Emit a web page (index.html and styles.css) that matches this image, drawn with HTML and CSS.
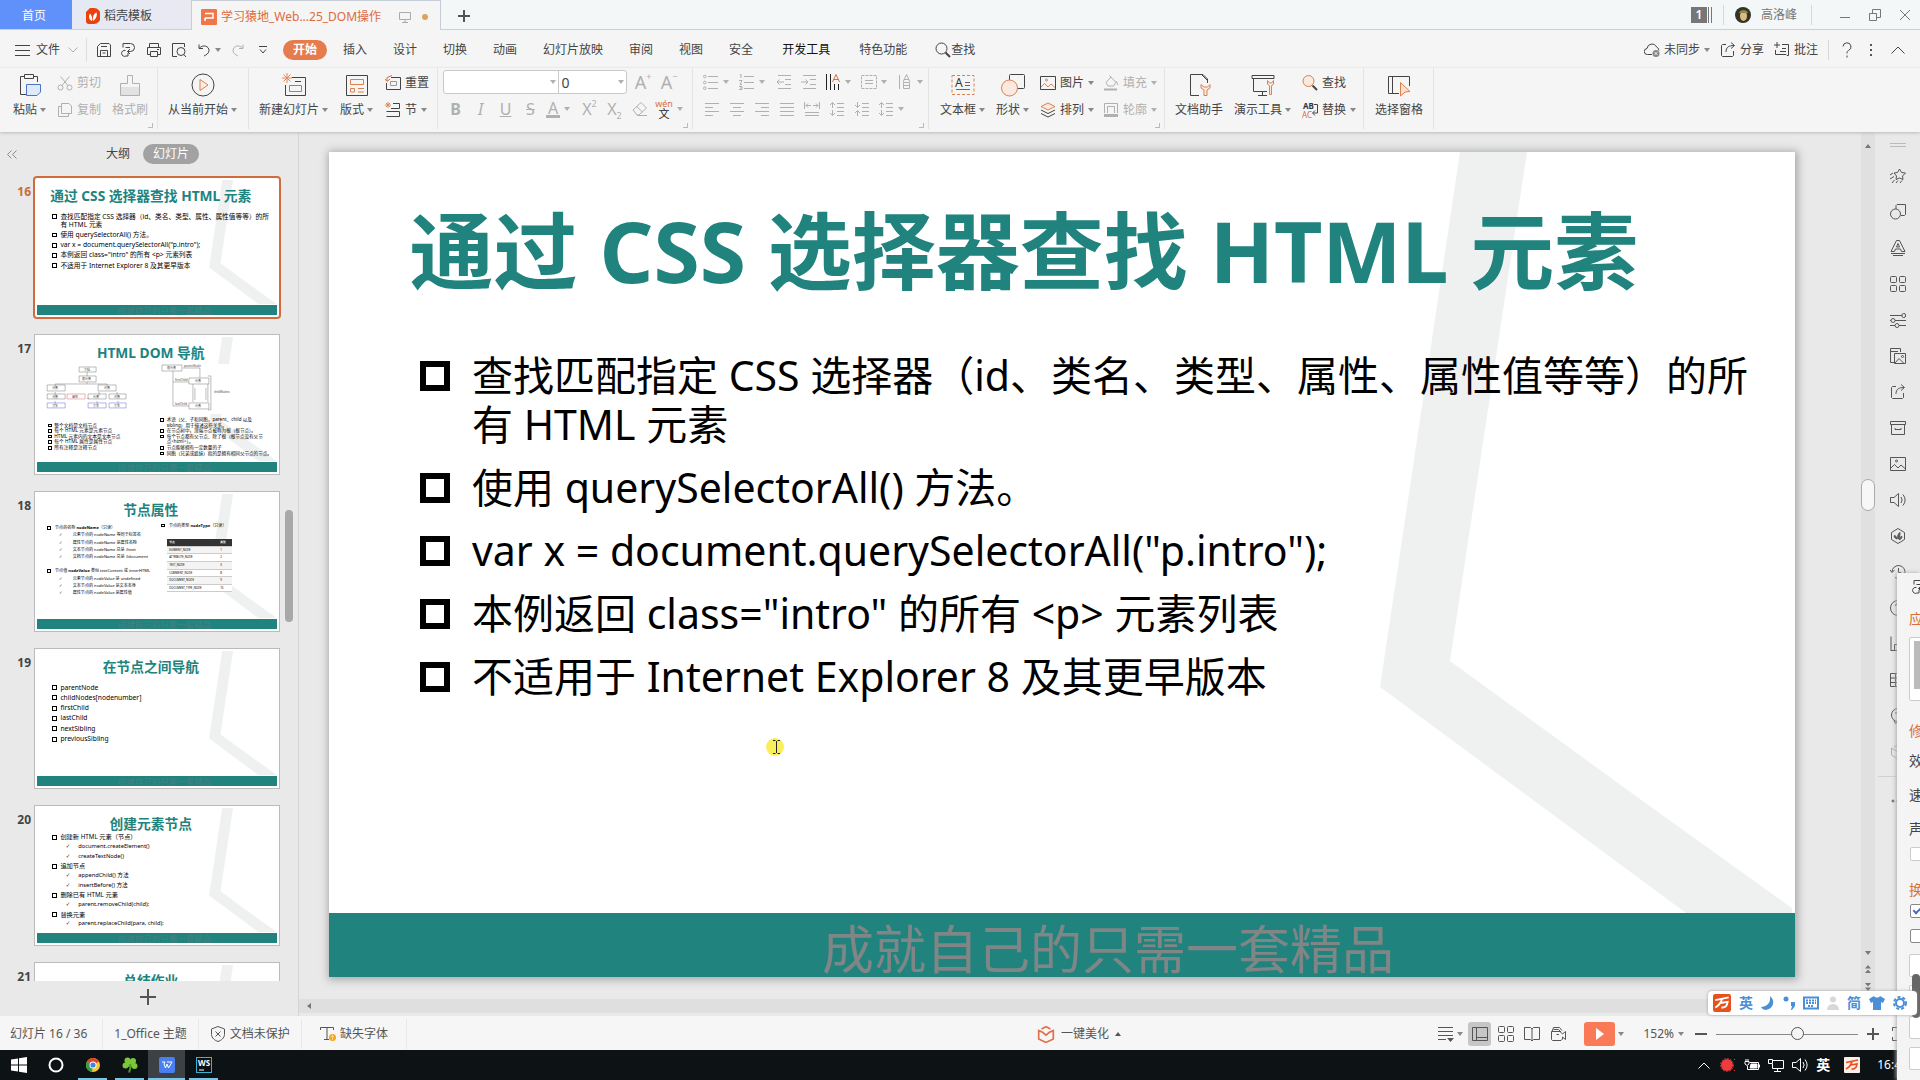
FILE: index.html
```html
<!DOCTYPE html>
<html lang="zh-CN">
<head>
<meta charset="utf-8">
<title>学习猿地_Web...25_DOM操作</title>
<link rel="stylesheet" href="styles.css">
</head>
<body>
<svg class="defs" width="0" height="0" aria-hidden="true">
  <symbol id="band" viewBox="0 0 1466 761" preserveAspectRatio="none"><path d="M1131 0H1198L1121 509 1311 647 1463 756V761H1357L1051 535Z" fill="#eff1f1"/></symbol>
  <symbol id="arrow" viewBox="0 0 6 4"><path d="M0 0H6L3 4Z" fill="currentColor"/></symbol>
  <symbol id="save" viewBox="0 0 16 16"><path d="M1.500 14.500V4.500L4.500 1.500H13L14.500 3V14.500Z M4.500 14V8.500H11.500V14 M5 4.500H11 M6.500 11H9.500"/></symbol>
  <symbol id="export" viewBox="0 0 16 16"><path d="M2 5.500V1.500H9.500A4 4 0 0 1 9.500 9.500H6.500 M4.500 5.500H9 M9 7 6.500 9.500 9 12 M4.500 8.500A3 3 0 1 0 5 14H7V11"/></symbol>
  <symbol id="print" viewBox="0 0 16 16"><path d="M3.500 5V1.500H12.500V5 M4 12.500H1.500V5.500H14.500V12.500H12 M4.500 9.500H11.500V14.500H4.500Z M11 7.500H13"/></symbol>
  <symbol id="preview" viewBox="0 0 16 16"><path d="M6 14.500H1.500V1.500H13.500V5 M12.800 12.500 15 15"/><circle cx="10" cy="9.500" r="4"/></symbol>
  <symbol id="undo" viewBox="0 0 16 16"><path d="M3 2.500V6.500H7 M3 6.500C7 2 13 4 13 8.500 13 11.500 10 13 8 14"/></symbol>
  <symbol id="redo" viewBox="0 0 16 16"><path d="M13 2.500V6.500H9 M13 6.500C9 2 3 4 3 8.500 3 11.500 6 13 8 14"/></symbol>
  <symbol id="search" viewBox="0 0 16 16"><circle cx="6.500" cy="6.500" r="5.500"/><path d="M10.500 10.500 15 15" stroke-width="2"/></symbol>
  <symbol id="cloud" viewBox="0 0 16 16"><path d="M8 12.500H3.500A3 3 0 0 1 3 6.500 5 5 0 0 1 12.500 5 4 4 0 0 1 15 8.500"/><circle cx="12" cy="11.500" r="3.500" fill="#888" stroke="none"/><path d="M10.800 10.300 13.200 12.700M13.200 10.300 10.800 12.700" stroke="#fff"/></symbol>
  <symbol id="share" viewBox="0 0 16 16"><path d="M6 2.500H2.500L1.500 3.500V13.500L2.500 14.500H12.500L13.500 13.500V9 M6 10C6 5 9 3.500 14 3.500 M11 .500 14.500 3.500 11 6.500"/></symbol>
  <symbol id="note" viewBox="0 0 16 16"><path d="M3 0V6M0 3H6 M8 2.500H14.500V13.500H13L12 12.500H1.500V8 M6 9.500H12M8 6.500H12"/></symbol>
  <symbol id="paste" viewBox="0 0 24 24"><path d="M7 3.500H2.500V21.500H8 M15 3.500H19.500V9 M6.500 1.500H15.500V5.500H6.500Z"/><path d="M8.500 11.500H22.500V19L19 22.500H8.500Z" fill="#dfeaff" stroke="#4a74c4"/></symbol>
  <symbol id="cut" viewBox="0 0 16 16"><circle cx="3.500" cy="12.500" r="2.500"/><circle cx="12.500" cy="12.500" r="2.500"/><path d="M5 10.500 12.500 1.500M11 10.500 3.500 1.500"/></symbol>
  <symbol id="copy" viewBox="0 0 16 16"><path d="M4.500 1.500H12L14.500 4V11.500H4.500Z M4 4.500H1.500V14.500H11.500V12"/></symbol>
  <symbol id="brush" viewBox="0 0 24 24"><path d="M9.500 10.500V2.500H14.500V10.500H21.500V22.500H2.500V10.500Z"/><path d="M3 14H21V22H3Z" fill="#e2e2e2" stroke="none"/></symbol>
  <symbol id="play" viewBox="0 0 24 24"><circle cx="12" cy="12" r="11"/><path d="M9 6.500 17 12 9 17.500Z" fill="#fdeee6" stroke="#d98250"/></symbol>
  <symbol id="newslide" viewBox="0 0 24 24"><path d="M10 4.500H23.500V22.500H3.500V12 M13 8.500H19"/><path d="M7.500 12.500H19.500V18.500H7.500Z" stroke="#888"/><path d="M5 0V10M0 5H10M1.500 1.500 8.500 8.500M8.500 1.500 1.500 8.500" stroke="#e08a58"/></symbol>
  <symbol id="layout" viewBox="0 0 24 24"><path d="M1.500 2.500H22.500V22.500H1.500Z"/><path d="M5.500 6.500H18.500V11.500H5.500Z M5.500 15.500H9.500V19H5.500Z M13 15.500H19M13 19H19" stroke="#d98250" fill="none"/></symbol>
  <symbol id="reset" viewBox="0 0 16 16"><path d="M6 2.500H15.500V14.500H1.500V8"/><path d="M5.500 6.500H11.500V10.500H5.500Z" stroke="#999"/><path d="M7 .500 2 2.500V6M0 4 2 6.500 5 4" stroke="#d9703c"/></symbol>
  <symbol id="section" viewBox="0 0 16 16"><path d="M8 1.500H14.500V6.500H6 M1.500 9.500H14.500V14.500H1.500"/><path d="M3 0V6M0 3H6M1 1 5 5M5 1 1 5" stroke="#e08a58"/></symbol>
  <symbol id="eraser" viewBox="0 0 16 16"><path d="M1 9 9 1.500 14.500 7 7 14H5Z M4.500 5.500 10.500 11 M5 14.500H15"/></symbol>
  <symbol id="bullets" viewBox="0 0 16 16"><path d="M5 2.500H15M5 8.500H15M5 14.500H15"/><circle cx="1.800" cy="2.500" r="1.300"/><circle cx="1.800" cy="8.500" r="1.300"/><circle cx="1.800" cy="14.200" r="1.300"/></symbol>
  <symbol id="numbers" viewBox="0 0 16 16"><path d="M5 2.500H15M5 8.500H15M5 14.500H15 M1 .500H2V4 M0 6.500H3L1 10.500H3 M0 12.500H3V15.500H0M1 14H3"/></symbol>
  <symbol id="outdent" viewBox="0 0 16 16"><path d="M2 1.500H15M9 5.500H15M9 10.500H15M2 14.500H15M1 8H8M3.500 5.500 1 8 3.500 10.500"/></symbol>
  <symbol id="indent" viewBox="0 0 16 16"><path d="M2 1.500H15M9 5.500H15M9 10.500H15M2 14.500H15M0 8H7M4.500 5.500 7 8 4.500 10.500"/></symbol>
  <symbol id="textdir" viewBox="0 0 16 16"><path d="M1.500 0V16M5.500 0V16M9.500 10V16M13.500 10V16" stroke="#222"/><path d="M7.500 8 11 .500 14.500 8M8.500 5.500H13.500" stroke="#d9703c"/></symbol>
  <symbol id="aligntext" viewBox="0 0 16 16"><path d="M.500 1.500H15.500V14.500H.500Z" stroke-dasharray="3 1"/><path d="M4 6.500H12M4 9.500H12"/></symbol>
  <symbol id="spacing" viewBox="0 0 16 16"><path d="M2.500 1V15M6 8 9.500 .500 13 8M7 5.500H12M6.500 8.500H12.500V14.500H6.500ZM6.500 11.500H12"/></symbol>
  <symbol id="al" viewBox="0 0 16 16"><path d="M1 2.500H15M1 6.500H9M1 10.500H15M1 14.500H9"/></symbol>
  <symbol id="ac" viewBox="0 0 16 16"><path d="M1 2.500H15M4 6.500H12M1 10.500H15M4 14.500H12"/></symbol>
  <symbol id="ar" viewBox="0 0 16 16"><path d="M1 2.500H15M7 6.500H15M1 10.500H15M7 14.500H15"/></symbol>
  <symbol id="aj" viewBox="0 0 16 16"><path d="M1 2.500H15M1 6.500H15M1 10.500H15M1 14.500H15"/></symbol>
  <symbol id="dist" viewBox="0 0 16 16"><path d="M.500 1V8M15.500 1V8M2 4.500H7M9 4.500H14M4 2.500 2 4.500 4 6.500M12 2.500 14 4.500 12 6.500M1 11.500H15M1 14.500H15"/></symbol>
  <symbol id="lsp" viewBox="0 0 16 16"><path d="M8 2.500H15M8 6.500H15M8 10.500H15M8 14.500H15M3.500 2V7M1 4 3.500 1.500 6 4M3.500 9V14M1 12 3.500 14.500 6 12"/></symbol>
  <symbol id="lsin" viewBox="0 0 16 16"><path d="M8 2.500H15M8 6.500H15M8 10.500H15M8 14.500H15M3.500 1V6M1 4 3.500 6.500 6 4M3.500 10V15M1 12 3.500 9.500 6 12"/></symbol>
  <symbol id="textbox" viewBox="0 0 24 24"><path d="M1 2.500H23V21.500H1Z" stroke="#d98250" stroke-dasharray="3 2"/><path d="M14 9.500H19M14 12.500H19M5 16.500H19" stroke="#666"/><text x="4" y="14" font-size="12" fill="#333" stroke="none">A</text></symbol>
  <symbol id="shape" viewBox="0 0 24 24"><rect x="8.500" y="1.500" width="15" height="14" rx="1"/><circle cx="8.500" cy="15" r="8" fill="#fbe9df" stroke="#d98250"/></symbol>
  <symbol id="pic" viewBox="0 0 16 16"><path d="M.500 1.500H15.500V14.500H.500Z"/></symbol>
  <symbol id="hills" viewBox="0 0 16 16"><path d="M1 12 4.500 8.500 8 12 11 9 15 12.500"/><circle cx="6.500" cy="5" r="1"/></symbol>
  <symbol id="stack" viewBox="0 0 16 16"><path d="M1 8 8 11.500 15 8M1 11.500 8 15 15 11.500"/><path d="M1 4.500 8 1 15 4.500 8 8Z" fill="#fbe9df" stroke="#d98250"/></symbol>
  <symbol id="fill" viewBox="0 0 16 16"><path d="M3 7.500 8 2 13 7.500 10.500 11H5Z M8 2 6.500 .500 M13 6 15 10"/><path d="M1 14.500H14" stroke-width="2"/></symbol>
  <symbol id="outline" viewBox="0 0 16 16"><path d="M1.500 11V1.500H14.500V11M4.500 11V4.500H11.500V11"/><path d="M1 13.500H15" stroke-width="3"/></symbol>
  <symbol id="assist" viewBox="0 0 24 24"><path d="M12 22.500H3.500V1.500H16L20.500 6V10M15 2 20 7"/><path d="M14 11.500V15L17 17V22.500H20V17L23 15V11.500L20.500 14H17Z" fill="#fbe9df" stroke="#d98250"/></symbol>
  <symbol id="demo" viewBox="0 0 24 24"><path d="M1 2.500H23V5.500H1Z M2.500 6V18.500H16M11.500 19V22.500M7 22.500H16"/><path d="M16.500 7.500V11L18.500 13V21.500H20.500V13L22.500 11V7.500L20.500 10H18.500Z" fill="#fbe9df" stroke="#d98250"/></symbol>
  <symbol id="find" viewBox="0 0 16 16"><path d="M10.500 10.500 15 15" stroke-width="2"/><circle cx="6.500" cy="6" r="5.500" fill="#fbe9df" stroke="#d98250"/></symbol>
  <symbol id="replace" viewBox="0 0 16 16"><path d="M12 2.500H15.500V11H11M13 8.500 10.500 11 13 13.500" /><text x="1" y="7" font-size="8" font-weight="700" fill="#333" stroke="none">AB</text><text x="0" y="16" font-size="8" fill="#d9703c" stroke="none">AC</text></symbol>
  <symbol id="pane" viewBox="0 0 24 24"><path d="M12 20.500H1.500V3.500H22.500V13M5.500 4V20"/><path d="M13.500 9.500 23 18.500 18 19 13.500 23Z" fill="#fbe0d0" stroke="#d98250"/></symbol>
  <symbol id="star" viewBox="0 0 16 16"><path d="M9.500 1 11.500 4.500 15.500 5 12.500 8 13 11.500 9.500 10 6 11.500 6.500 8 4 5 7.500 4.500Z M0 7 3 5M0 11 4 8.500M2 15 4.500 12M6 15 8 12.500M10 15 12 12.500"/></symbol>
  <symbol id="shapes" viewBox="0 0 16 16"><path d="M6 5V1.500L7 .500H15.500V10.500L14.500 11.500H11"/><circle cx="5.500" cy="10" r="5"/></symbol>
  <symbol id="wordart" viewBox="0 0 16 16"><path d="M1 11.500 6.500 .500H9.500L15 11.500H11.500L10.500 9H5.500L4.500 11.500Z M6.500 7 8 3.500 9.500 7Z M1 13.500H15M3 15.500H13"/></symbol>
  <symbol id="apps" viewBox="0 0 16 16"><rect x=".500" y=".500" width="6" height="6" rx="1"/><rect x="9.500" y=".500" width="6" height="6" rx="1"/><rect x=".500" y="9.500" width="6" height="6" rx="1"/><rect x="9.500" y="9.500" width="6" height="6" rx="1"/></symbol>
  <symbol id="sliders" viewBox="0 0 16 16"><path d="M0 3.500H12M0 8.500H1M5 8.500H16M0 13.500H5M9 13.500H16"/><rect x="12" y="1.500" width="3.500" height="4" rx="1.500"/><rect x="1" y="6.500" width="4" height="4" rx="2"/><rect x="5" y="11.500" width="4" height="4" rx="2"/></symbol>
  <symbol id="album" viewBox="0 0 16 16"><path d="M4 14.500H.500V.500H10.500V4M.500 3.500H8 M4.500 5.500H15.500V15.500H4.500ZM5 15 9 10.500 13.500 15"/><circle cx="12.500" cy="8.500" r="1"/></symbol>
  <symbol id="box" viewBox="0 0 16 16"><path d="M.500 1.500H15.500V4.500H.500Z M1.500 5V14.500H14.500V5M5 8V9.500H11V8"/></symbol>
  <symbol id="speaker" viewBox="0 0 16 16"><path d="M.500 5.500H4L8.500 1.500V14.500L4 10.500H.500Z M11 5A5 5 0 0 1 11 11M13 2.500A9 9 0 0 1 13 13.500"/></symbol>
  <symbol id="hexa" viewBox="0 0 16 16"><path d="M8 .500 14.500 4.500V11.500L8 15.500 1.500 11.500V4.500Z"/><path d="M7 11C4 10 4 8 4.500 7.500 6 8 7 9 7 11ZM8 11C7 7 9 5 10 4.500 10 6 10 9 8 11ZM9 11.500C9 9.500 11 8.500 12 8.500 12 10 11 11.500 9 11.500" fill="currentColor"/></symbol>
  <symbol id="history" viewBox="0 0 16 16"><path d="M2 8A6.500 6.500 0 1 1 5 13.500M0 6 2 8.500 4.500 6M8.500 4V8.500H11"/></symbol>
  <symbol id="help" viewBox="0 0 16 16"><circle cx="8" cy="8" r="7.500"/><path d="M5.500 6A2.500 2.500 0 1 1 8 8.500V10M8 11.500V13"/></symbol>
  <symbol id="chart" viewBox="0 0 16 16"><path d="M1 .500V15M1 14.500H16M4.500 14V8.500H8.500V14M8.500 14V2.500H12.500V14"/></symbol>
  <symbol id="grid" viewBox="0 0 16 16"><path d="M.500 1.500H15.500V14.500H.500ZM1 6H15M1 10.500H15M5.500 2V14M10.500 2V14"/></symbol>
  <symbol id="pin" viewBox="0 0 16 16"><circle cx="8" cy="7" r="6.500"/><path d="M4 12.500 5.500 15.500 8 13.500M5 5H10M7.500 5V10"/></symbol>
  <symbol id="cube" viewBox="0 0 16 16"><path d="M1.500 4V11L8 15V8Z M4 3 8 1 14 4.500V11"/></symbol>
  <symbol id="shield" viewBox="0 0 16 16"><path d="M8 .500 14.500 3V8.500C14.500 12 11 14.500 8 15.500 5 14.500 1.500 12 1.500 8.500V3ZM5.500 5.500 10.500 10.500M10.500 5.500 5.500 10.500"/></symbol>
  <symbol id="nofont" viewBox="0 0 16 16"><path d="M.500 4V1.500H13.500V4M7 2V13.500M4 13.500H9"/><circle cx="12.500" cy="11.500" r="3.500" fill="#f5a623" stroke="none"/><path d="M11.500 10.500C12 9 14 10 12.500 11.500M12.500 12.500V13.500" stroke="#fff"/></symbol>
  <symbol id="beauty" viewBox="0 0 16 16"><path d="M1.500 5V12.500L8 15.500 14.500 12.500V5L11 6.500 8 9 5 6.500Z M4 3.500 8 1.500 12 3.500" stroke-width="1.500"/></symbol>
  <symbol id="notes" viewBox="0 0 18 16"><path d="M1 1.500H16M1 5.500H16M1 9.500H16M1 13.500H9"/><path d="M10 12H17L13.500 16Z" fill="currentColor" stroke="none"/></symbol>
  <symbol id="normal" viewBox="0 0 16 16"><path d="M.500 1.500H15.500V14.500H.500ZM4.500 2V14M4.500 11.500H15"/></symbol>
  <symbol id="book" viewBox="0 0 16 16"><path d="M.500 1.500H6.500L8 3 9.500 1.500H15.500V13.500H9.500L8 15 6.500 13.500H.500ZM8 3V15"/></symbol>
  <symbol id="camera" viewBox="0 0 16 16"><path d="M1.500 5.500V13.500L2.500 14.500H11L12.500 13V11L15.500 13.500V5.500L12.500 8 10 5.500Z M2 5.500 3.500 1.500H9.500L12 4.500 M3.500 3.500H8.500L11 6 M6.500 8.500H9"/></symbol>
  <symbol id="full" viewBox="0 0 16 16"><path d="M.500 5V1.500H5M11 1.500H15.500V5M.500 11V14.500H5M11 14.500H15.500V11"/></symbol>
  <symbol id="wan" viewBox="0 0 16 16"><rect width="16" height="16" rx="2" fill="#e8501e"/><path d="M2 5.500 14 3M8 4.500C7 8 5 10.500 2 12M6.500 8 13 7C12.500 10.500 11 12.500 7.500 12" stroke="#fff" stroke-width="1.700" fill="none"/></symbol>
</svg>

<header class="titlebar">
  <nav class="doctabs">
    <button class="doctab home">首页</button>
    <button class="doctab docer"><svg width="14" height="16" viewBox="0 0 14 16"><path d="M4 0H8A6 7 0 0 1 8 16H3A3 3 0 0 1 0 13V4Z" fill="#e8430f"/><path d="M6 13C2 11 3 7 4 5.500 6 8 6.500 10 6 13ZM7 13C6 8 9 5 10.500 4.500 11.500 8 10 11 7 13Z" fill="#fff"/></svg>稻壳模板</button>
    <button class="doctab current"><svg width="16" height="16" viewBox="0 0 16 16"><rect width="16" height="16" rx="1" fill="#f0764a"/><path d="M4 12V9M4 4.500H12V9H4" stroke="#fff" stroke-width="1.500" fill="none"/></svg><span>学习猿地_Web...25_DOM操作</span><svg class="ico s screen" width="12" height="12" viewBox="0 0 12 12"><path d="M.500 1.500H11.500V8.500H.500ZM6 9V11.500M3 11.500H9"/></svg><i class="dirty"></i></button>
    <button class="addtab" aria-label="新建"><svg class="ico" width="12" height="12" viewBox="0 0 12 12"><path d="M6 0V12M0 6H12" stroke-width="2"/></svg></button>
  </nav>
  <div class="account">
    <span class="count"><b>1</b></span><i class="vr"></i>
    <svg width="16" height="16" viewBox="0 0 16 16"><circle cx="8" cy="8" r="8" fill="#2f3527"/><ellipse cx="8.500" cy="9" rx="3.500" ry="5" fill="#e0b982"/><path d="M4 6C5 2 12 2 13 6Z" fill="#8d8a4a"/></svg>
    <span class="user">高洛峰</span><i class="vr"></i>
    <button aria-label="最小化"><svg class="ico" width="12" height="12" viewBox="0 0 12 12"><path d="M1 8.500H11"/></svg></button>
    <button aria-label="还原"><svg class="ico" width="12" height="12" viewBox="0 0 12 12"><path d="M.500 4.500H7.500V11.500H.500ZM3.500 4V.500H11.500V8.500H8"/></svg></button>
    <button aria-label="关闭"><svg class="ico" width="12" height="12" viewBox="0 0 12 12"><path d="M1 1 11 11M11 1 1 11"/></svg></button>
  </div>
</header>

<div class="menubar">
  <button class="file"><svg class="ico" width="15" height="12" viewBox="0 0 15 12"><path d="M0 1.500H15M0 6.500H15M0 11.500H15"/></svg>文件<svg class="ico pale" width="10" height="6" viewBox="0 0 10 6"><path d="M.500 .500 5 5 9.500 .500"/></svg></button>
  <div class="quick">
    <button aria-label="保存"><svg class="ico s16"><use href="#save"/></svg></button>
    <button aria-label="输出"><svg class="ico s16"><use href="#export"/></svg></button>
    <button aria-label="打印"><svg class="ico s16"><use href="#print"/></svg></button>
    <button aria-label="预览"><svg class="ico s16"><use href="#preview"/></svg></button>
    <button aria-label="撤销"><svg class="ico s16"><use href="#undo"/></svg><svg class="dd"><use href="#arrow"/></svg></button>
    <button aria-label="恢复" class="pale"><svg class="ico s16"><use href="#redo"/></svg></button>
    <button aria-label="更多"><svg class="ico" width="8" height="8" viewBox="0 0 8 8"><path d="M0 .500H8M1 3.500 4 7 7 3.500"/></svg></button>
  </div>
  <nav class="tabs">
    <button class="on">开始</button><button>插入</button><button>设计</button><button>切换</button><button>动画</button><button>幻灯片放映</button><button>审阅</button><button>视图</button><button>安全</button><button class="dev">开发工具</button><button>特色功能</button><button class="seek"><svg class="ico s16"><use href="#search"/></svg>查找</button>
  </nav>
  <div class="cloudbar">
    <button><svg class="ico s16"><use href="#cloud"/></svg>未同步<svg class="dd"><use href="#arrow"/></svg></button>
    <button><svg class="ico s16"><use href="#share"/></svg>分享</button>
    <button><svg class="ico s16"><use href="#note"/></svg>批注</button>
    <i class="vr"></i>
    <button class="sym" aria-label="帮助"><svg class="ico" width="10" height="16" viewBox="0 0 10 16"><path d="M1 4.500A4 4 0 1 1 6.500 8.500C5 9.500 5 10 5 11.500M5 13.500V15.500"/></svg></button>
    <button class="sym" aria-label="更多"><svg width="3" height="12" viewBox="0 0 3 12"><path d="M0 0H2V2H0ZM0 5H2V7H0ZM0 10H2V12H0Z" fill="#555"/></svg></button>
    <button class="sym" aria-label="收起"><svg class="ico" width="14" height="8" viewBox="0 0 14 8"><path d="M.500 7.500 7 1 13.500 7.500"/></svg></button>
  </div>
</div>

<div class="ribbon">
  <section class="g g1">
    <button class="lg"><svg class="ico s24"><use href="#paste"/></svg><span>粘贴<svg class="dd"><use href="#arrow"/></svg></span></button>
    <div class="stack pale">
      <button><svg class="ico s16"><use href="#cut"/></svg>剪切</button>
      <button><svg class="ico s16"><use href="#copy"/></svg>复制</button>
    </div>
    <button class="lg pale"><svg class="ico s24"><use href="#brush"/></svg><span>格式刷</span></button>
    <i class="corner"></i>
  </section>
  <section class="g g2"><button class="lg"><svg class="ico s24"><use href="#play"/></svg><span>从当前开始<svg class="dd"><use href="#arrow"/></svg></span></button></section>
  <section class="g g3">
    <button class="lg"><svg class="ico s24"><use href="#newslide"/></svg><span>新建幻灯片<svg class="dd"><use href="#arrow"/></svg></span></button>
    <button class="lg"><svg class="ico s24"><use href="#layout"/></svg><span>版式<svg class="dd"><use href="#arrow"/></svg></span></button>
    <div class="stack">
      <button><svg class="ico s16"><use href="#reset"/></svg>重置</button>
      <button><svg class="ico s16"><use href="#section"/></svg>节<svg class="dd"><use href="#arrow"/></svg></button>
    </div>
  </section>
  <section class="g g4 rows pale">
    <div class="row">
      <div class="combo"><label class="font"><input aria-label="字体" value=""><svg class="dd"><use href="#arrow"/></svg></label><label class="size"><input aria-label="字号" value="0"><svg class="dd"><use href="#arrow"/></svg></label></div>
      <button class="t big">A<sup>+</sup></button><button class="t big">A<sup>−</sup></button>
    </div>
    <div class="row">
      <button class="t"><b>B</b></button><button class="t"><em>I</em></button><button class="t"><u>U</u></button><button class="t"><s>S</s></button><button class="t wide"><span class="acol">A</span><svg class="dd"><use href="#arrow"/></svg></button><button class="t">X<sup>2</sup></button><button class="t">X<sub>2</sub></button><button class="t"><svg class="ico s16"><use href="#eraser"/></svg></button><button class="t wide"><span class="wen"><i>wén</i>文</span><svg class="dd"><use href="#arrow"/></svg></button>
    </div>
    <i class="corner"></i>
  </section>
  <section class="g g5 rows pale">
    <div class="row">
      <button class="t wide"><svg class="ico s16"><use href="#bullets"/></svg><svg class="dd"><use href="#arrow"/></svg></button><button class="t wide"><svg class="ico s16"><use href="#numbers"/></svg><svg class="dd"><use href="#arrow"/></svg></button><button class="t"><svg class="ico s16"><use href="#outdent"/></svg></button><button class="t"><svg class="ico s16"><use href="#indent"/></svg></button><button class="t wide"><svg class="ico s16"><use href="#textdir"/></svg><svg class="dd"><use href="#arrow"/></svg></button><button class="t wide"><svg class="ico s16"><use href="#aligntext"/></svg><svg class="dd"><use href="#arrow"/></svg></button><button class="t wide"><svg class="ico s16"><use href="#spacing"/></svg><svg class="dd"><use href="#arrow"/></svg></button>
    </div>
    <div class="row">
      <button class="t"><svg class="ico s16"><use href="#al"/></svg></button><button class="t"><svg class="ico s16"><use href="#ac"/></svg></button><button class="t"><svg class="ico s16"><use href="#ar"/></svg></button><button class="t"><svg class="ico s16"><use href="#aj"/></svg></button><button class="t"><svg class="ico s16"><use href="#dist"/></svg></button><button class="t"><svg class="ico s16"><use href="#lsp"/></svg></button><button class="t"><svg class="ico s16"><use href="#lsin"/></svg></button><button class="t wide"><svg class="ico s16"><use href="#lsp"/></svg><svg class="dd"><use href="#arrow"/></svg></button>
    </div>
    <i class="corner"></i>
  </section>
  <section class="g g6">
    <button class="lg"><svg class="ico s24"><use href="#textbox"/></svg><span>文本框<svg class="dd"><use href="#arrow"/></svg></span></button>
    <button class="lg"><svg class="ico s24"><use href="#shape"/></svg><span>形状<svg class="dd"><use href="#arrow"/></svg></span></button>
    <div class="stack">
      <button><svg class="ico s16"><use href="#pic"/><use href="#hills" class="hot"/></svg>图片<svg class="dd"><use href="#arrow"/></svg></button>
      <button><svg class="ico s16"><use href="#stack"/></svg>排列<svg class="dd"><use href="#arrow"/></svg></button>
    </div>
    <div class="stack pale">
      <button><svg class="ico s16"><use href="#fill"/></svg>填充<svg class="dd"><use href="#arrow"/></svg></button>
      <button><svg class="ico s16"><use href="#outline"/></svg>轮廓<svg class="dd"><use href="#arrow"/></svg></button>
    </div>
    <i class="corner"></i>
  </section>
  <section class="g g7">
    <button class="lg"><svg class="ico s24"><use href="#assist"/></svg><span>文档助手</span></button>
    <button class="lg"><svg class="ico s24"><use href="#demo"/></svg><span>演示工具<svg class="dd"><use href="#arrow"/></svg></span></button>
    <div class="stack">
      <button><svg class="ico s16"><use href="#find"/></svg>查找</button>
      <button><svg class="ico s16"><use href="#replace"/></svg>替换<svg class="dd"><use href="#arrow"/></svg></button>
    </div>
  </section>
  <section class="g g8"><button class="lg"><svg class="ico s24"><use href="#pane"/></svg><span>选择窗格</span></button></section>
</div>

<div class="work">
  <aside class="outline">
    <div class="viewsw">
      <button class="fold" aria-label="折叠"><svg class="ico" width="10" height="9" viewBox="0 0 10 9"><path d="M4.500 .500 .500 4.500 4.500 8.500M9.500 .500 5.500 4.500 9.500 8.500"/></svg></button>
      <button>大纲</button><button class="on">幻灯片</button>
    </div>
    <ol class="thumbs">
      <li class="on"><span class="no">16</span><div class="frame"><article class="slide">
        <svg class="band"><use href="#band"/></svg>
        <h2>通过 CSS 选择器查找 HTML 元素</h2>
        <ul><li>查找匹配指定 CSS 选择器（id、类名、类型、属性、属性值等等）的所<br>有 HTML 元素</li><li>使用 querySelectorAll() 方法。</li><li>var x = document.querySelectorAll("p.intro");</li><li>本例返回 class="intro" 的所有 &lt;p&gt; 元素列表</li><li>不适用于 Internet Explorer 8 及其更早版本</li></ul>
        <footer>成就自己的只需一套精品</footer></article></div></li>
      <li><span class="no">17</span><div class="frame"><article class="slide nav">
        <svg class="band"><use href="#band"/></svg>
        <h2>HTML DOM 导航</h2>
        <svg class="tree" viewBox="0 0 240 50">
          <path class="paper" d="M10 0H95V50H10ZM124 0H200V50H124Z"/>
          <path d="M50 8V12M50 18V20M18 20H70M18 20V23M70 20V23M18 28V32M18 37V41M62 28V32M80 28V32M60 37V41M81 37V41M50 34.500H52M146 4H163V14M136 7V42H152M136 18H152M156 20V38M171 20V38M171 12H174V46H171M158 24V36M169 24V36"/>
          <path d="M42 3H59V8H42ZM42 12H59V18H42ZM10 21H28V27H10ZM61 21H79V27H61ZM10 30H28V35H10ZM51 30H69V35H51ZM72 30H89V35H72ZM125 1H145V7H125ZM152 14H172V20H152ZM152 39H172V45H152Z"/>
          <path stroke="#d66" d="M30 30H48V35H30Z"/><path stroke="#66d" d="M10 39H28V44H10ZM51 39H69V44H51ZM72 39H89V44H72Z"/>
          <g font-size="3"><text x="47" y="7">文档</text><text x="45" y="16">根元素</text><text x="15" y="25">元素</text><text x="67" y="25">元素</text><text x="15" y="34">元素</text><text x="35" y="34">属性</text><text x="56" y="34">元素</text><text x="77" y="34">元素</text><text x="15" y="43">文本</text><text x="56" y="43">文本</text><text x="77" y="43">文本</text><text x="130" y="5">根元素</text><text x="147" y="3">parentNode</text><text x="138" y="17">firstChild</text><text x="138" y="41">lastChild</text><text x="158" y="18">元素</text><text x="158" y="43">元素</text><text x="177" y="29">childNodes</text></g>
        </svg>
        <div class="cols">
          <ul><li>整个文档是文档节点</li><li>每个 HTML 元素是元素节点</li><li>HTML 元素内的文本是文本节点</li><li>每个 HTML 属性是属性节点</li><li>所有注释是注释节点</li></ul>
          <ul><li>术语（父、子和同胞，parent、child 以及<br>sibling）用于描述这些关系。</li><li>在节点树中，顶端节点被称为根（根节点）。</li><li>每个节点都有父节点、除了根（根节点没有父节<br>点&lt;html&gt;）。</li><li>节点能够拥有一定数量的子</li><li>同胞（兄弟或姐妹）指的是拥有相同父节点的节点。</li></ul>
        </div>
        <footer>成就自己的只需一套精品</footer></article></div></li>
      <li><span class="no">18</span><div class="frame"><article class="slide prop">
        <svg class="band"><use href="#band"/></svg>
        <h2>节点属性</h2>
        <div class="cols">
          <ul><li>节点的名称 <b>nodeName</b>（只读）</li><li class="sub">元素节点的 nodeName 等同于标签名</li><li class="sub">属性节点的 nodeName 是属性名称</li><li class="sub">文本节点的 nodeName 总是 #text</li><li class="sub">文档节点的 nodeName 总是 #document</li><li class="next">节点值 <b>nodeValue</b> 类似 textContent 或 innerHTML</li><li class="sub">元素节点的 nodeValue 是 undefined</li><li class="sub">文本节点的 nodeValue 是文本本身</li><li class="sub">属性节点的 nodeValue 是属性值</li></ul>
          <div><ul><li>节点的类型 <b>nodeType</b>（只读）</li></ul>
          <table><tr><th>节点</th><th>类型</th></tr><tr><td>ELEMENT_NODE</td><td>1</td></tr><tr><td>ATTRIBUTE_NODE</td><td>2</td></tr><tr><td>TEXT_NODE</td><td>3</td></tr><tr><td>COMMENT_NODE</td><td>8</td></tr><tr><td>DOCUMENT_NODE</td><td>9</td></tr><tr><td>DOCUMENT_TYPE_NODE</td><td>10</td></tr></table></div>
        </div>
        <footer>成就自己的只需一套精品</footer></article></div></li>
      <li><span class="no">19</span><div class="frame"><article class="slide">
        <svg class="band"><use href="#band"/></svg>
        <h2>在节点之间导航</h2>
        <ul><li>parentNode</li><li>childNodes[nodenumber]</li><li>firstChild</li><li>lastChild</li><li>nextSibling</li><li>previousSibling</li></ul>
        <footer>成就自己的只需一套精品</footer></article></div></li>
      <li><span class="no">20</span><div class="frame"><article class="slide make">
        <svg class="band"><use href="#band"/></svg>
        <h2>创建元素节点</h2>
        <ul><li>创建新 HTML 元素（节点）</li><li class="sub">document.createElement()</li><li class="sub">createTextNode()</li><li>追加节点</li><li class="sub">appendChild() 方法</li><li class="sub">insertBefore() 方法</li><li>删除已有 HTML 元素</li><li class="sub">parent.removeChild(child);</li><li>替换元素</li><li class="sub">parent.replaceChild(para, child);</li></ul>
        <footer>成就自己的只需一套精品</footer></article></div></li>
      <li><span class="no">21</span><div class="frame"><article class="slide">
        <svg class="band"><use href="#band"/></svg>
        <h2>总结作业</h2></article></div></li>
    </ol>
    <i class="thumbbar"></i>
    <button class="addslide" aria-label="新建幻灯片"><svg class="ico" width="16" height="16" viewBox="0 0 16 16"><path d="M8 0V16M0 8H16" stroke-width="2"/></svg></button>
  </aside>

  <main class="stage">
    <div class="canvas">
      <article class="slide main">
        <svg class="band"><use href="#band"/></svg>
        <h1>通过 CSS 选择器查找 HTML 元素</h1>
        <ul><li>查找匹配指定 CSS 选择器（id、类名、类型、属性、属性值等等）的所<br>有 HTML 元素</li><li>使用 querySelectorAll() 方法。</li><li>var x = document.querySelectorAll("p.intro");</li><li>本例返回 class="intro" 的所有 &lt;p&gt; 元素列表</li><li>不适用于 Internet Explorer 8 及其更早版本</li></ul>
        <svg class="pointer" width="20" height="20" viewBox="0 0 20 20"><circle cx="9" cy="10" r="9" fill="#f8ef5a"/><path d="M7 3.500H9.500M11.500 3.500H14M10.500 4V16M7 16.500H9.500M11.500 16.500H14" stroke="#222" fill="none"/></svg>
        <footer>成就自己的只需一套精品</footer>
      </article>
    </div>
    <div class="hbar"><svg width="4" height="6" viewBox="0 0 4 6"><path d="M4 0V6L0 3Z" fill="#777"/></svg></div>
  </main>

  <div class="vbar">
    <svg width="6" height="4" viewBox="0 0 6 4"><path d="M0 4H6L3 0Z" fill="#777"/></svg>
    <i class="grip"></i>
    <svg width="6" height="4"><use href="#arrow"/></svg>
    <svg width="6" height="8" viewBox="0 0 6 8"><path d="M0 3.500H6L3 0ZM0 8H6L3 4.500Z" fill="#777"/></svg>
    <svg width="6" height="8" viewBox="0 0 6 8"><path d="M0 0H6L3 3.500ZM0 4.500H6L3 8Z" fill="#777"/></svg>
  </div>

  <nav class="dock">
    <i class="handle"></i>
    <button aria-label="动画"><svg class="ico s16"><use href="#star"/></svg></button>
    <button aria-label="形状"><svg class="ico s16"><use href="#shapes"/></svg></button>
    <button aria-label="艺术字"><svg class="ico s16"><use href="#wordart"/></svg></button>
    <button aria-label="应用"><svg class="ico s16"><use href="#apps"/></svg></button>
    <button aria-label="属性"><svg class="ico s16"><use href="#sliders"/></svg></button>
    <button aria-label="图库"><svg class="ico s16"><use href="#album"/></svg></button>
    <button aria-label="分享"><svg class="ico s16"><use href="#share"/></svg></button>
    <button aria-label="素材"><svg class="ico s16"><use href="#box"/></svg></button>
    <button aria-label="图片"><svg class="ico s16"><use href="#pic"/><use href="#hills"/></svg></button>
    <button aria-label="音频"><svg class="ico s16"><use href="#speaker"/></svg></button>
    <button aria-label="稻壳"><svg class="ico s16"><use href="#hexa"/></svg></button>
    <button aria-label="历史"><svg class="ico s16"><use href="#history"/></svg></button>
    <button aria-label="帮助"><svg class="ico s16"><use href="#help"/></svg></button>
    <button aria-label="图表"><svg class="ico s16"><use href="#chart"/></svg></button>
    <button aria-label="表格"><svg class="ico s16"><use href="#grid"/></svg></button>
    <button aria-label="定位"><svg class="ico s16"><use href="#pin"/></svg></button>
    <button aria-label="模型" class="pale"><svg class="ico s16"><use href="#cube"/></svg></button>
    <i class="rule"></i>
    <button aria-label="更多"><svg class="ico" width="14" height="4" viewBox="0 0 14 4"><circle cx="2" cy="2" r="1"/><circle cx="7" cy="2" r="1"/><circle cx="12" cy="2" r="1"/></svg></button>
  </nav>
</div>

<div class="status">
  <span class="cell first">幻灯片 16 / 36</span>
  <span class="cell">1_Office 主题</span>
  <button class="cell"><svg class="ico s16"><use href="#shield"/></svg>文档未保护</button>
  <button class="cell missing"><svg class="ico s16"><use href="#nofont"/></svg>缺失字体</button>
  <button class="beauty"><svg class="ico s18"><use href="#beauty"/></svg>一键美化<svg width="6" height="4" viewBox="0 0 6 4"><path d="M0 4H6L3 0Z" fill="#555"/></svg></button>
  <div class="views">
    <button class="nt" aria-label="备注"><svg class="ico" width="18" height="16"><use href="#notes"/></svg><svg class="dd"><use href="#arrow"/></svg></button>
    <button class="on" aria-label="普通"><svg class="ico s16"><use href="#normal"/></svg></button>
    <button aria-label="浏览"><svg class="ico s16"><use href="#apps"/></svg></button>
    <button aria-label="阅读"><svg class="ico s16"><use href="#book"/></svg></button>
    <button aria-label="录制"><svg class="ico s16"><use href="#camera"/></svg></button>
    <button class="show" aria-label="放映"><svg width="8" height="12" viewBox="0 0 8 12"><path d="M0 0 8 6 0 12Z" fill="#fff"/></svg></button>
    <svg class="dd"><use href="#arrow"/></svg>
  </div>
  <div class="zoomer">
    <span>152%</span><svg class="dd"><use href="#arrow"/></svg>
    <button aria-label="缩小"><svg class="ico" width="12" height="12" viewBox="0 0 12 12"><path d="M0 6H12" stroke-width="2"/></svg></button>
    <input type="range" aria-label="缩放" min="0" max="100" value="58">
    <button aria-label="放大"><svg class="ico" width="12" height="12" viewBox="0 0 12 12"><path d="M6 0V12M0 6H12" stroke-width="2"/></svg></button>
    <button class="fit" aria-label="适应窗口"><svg class="ico s16"><use href="#full"/></svg></button>
  </div>
</div>

<footer class="taskbar">
  <nav>
    <button aria-label="开始"><svg width="16" height="16" viewBox="0 0 16 16"><path d="M0 2.500 7 1.500V7.500H0ZM8 1.300 16 0V7.500H8ZM0 8.500H7V14.500L0 13.500ZM8 8.500H16V16L8 14.800Z" fill="#fff"/></svg></button>
    <button aria-label="搜索"><svg width="16" height="16" viewBox="0 0 16 16"><circle cx="8" cy="8" r="6.500" fill="none" stroke="#fff" stroke-width="2"/></svg></button>
    <button class="run" aria-label="Chrome"><svg width="16" height="16" viewBox="0 0 16 16"><circle cx="8" cy="8" r="7" fill="#f7c935"/><path d="M8 8 2 4.500A7 7 0 0 1 14 4.500Z" fill="#e0402f"/><path d="M8 8 2 4.500A7 7 0 0 0 7 15Z" fill="#2f9e4f"/><circle cx="8" cy="8" r="3.500" fill="#fff"/><circle cx="8" cy="8" r="2.600" fill="#4580e8"/></svg></button>
    <button class="run" aria-label="四叶草"><svg width="16" height="16" viewBox="0 0 16 16"><g fill="#7cc63a"><circle cx="5.500" cy="3.500" r="3"/><circle cx="11" cy="4" r="3"/><circle cx="3.500" cy="8.500" r="3"/><circle cx="12.500" cy="9" r="3"/><circle cx="8" cy="7" r="3"/></g><path d="M8 7C9 10 8 13 7 15.500" stroke="#4c9a1e" stroke-width="2" fill="none"/></svg></button>
    <button class="run active" aria-label="WPS"><svg width="16" height="16" viewBox="0 0 16 16"><rect width="16" height="16" rx="2" fill="#4a7ff0"/><path d="M3 5H6L5 7 6.500 11 8 7 9.500 11 13 5H8" stroke="#fff" fill="none"/></svg></button>
    <button class="run" aria-label="WebStorm"><svg width="16" height="16" viewBox="0 0 16 16"><rect x=".500" y=".500" width="15" height="15" fill="#0b0f12" stroke="#35b5cf"/><text x="2" y="9" font-size="8" font-weight="700" fill="#fff">WS</text><path d="M3 13H8" stroke="#fff"/></svg></button>
  </nav>
  <div class="tray">
    <svg class="ico up" width="12" height="7" viewBox="0 0 12 7"><path d="M.500 6.500 6 1 11.500 6.500"/></svg>
    <svg width="16" height="16" viewBox="0 0 16 16"><circle cx="7" cy="8" r="6" fill="#ef3b3b"/><circle cx="7" cy="8" r="6.500" fill="none" stroke="#a33" stroke-dasharray="2 1"/><path d="M14 3 15 2M14 13 15 14" stroke="#d44"/></svg>
    <svg class="ico" width="16" height="16" viewBox="0 0 16 16"><path d="M5.500 5.500H14.500V12.500H3.500V9M1 4.500H5V7L3 8.500 1 7ZM2 2V4M4 2V4M15.500 7.500V10.500"/><path d="M7 7H13V11H6Z" fill="#fff"/></svg>
    <svg class="ico" width="16" height="16" viewBox="0 0 16 16"><path d="M5 3.500H15.500V11.500H4.500V7M9.500 12V14.500M6 14.500H13M.500 2.500H4.500V6.500H.500Z"/></svg>
    <svg class="ico s16"><use href="#speaker"/></svg>
    <b>英</b>
    <svg width="16" height="16" viewBox="0 0 16 16"><rect width="16" height="16" rx="1" fill="#fbeee8"/><path d="M2 5.500 14 3M8 4.500C7 8 5 10.500 2 12M6.500 8 13 7C12.500 10.500 11 12.500 7.500 12" stroke="#e8501e" stroke-width="1.700" fill="none"/></svg>
    <time>16:4</time>
  </div>
</footer>

<aside class="panel">
  <svg class="ico s16 top"><use href="#export"/></svg>
  <h3>应</h3>
  <div class="list"><i></i></div>
  <h3>修</h3>
  <p>效</p><p>速</p><p>声</p>
  <label><input type="checkbox" disabled aria-label="循环播放"></label>
  <h3>换</h3>
  <label><input type="checkbox" checked aria-label="单击鼠标时"></label>
  <label><input type="checkbox" aria-label="自动换片"></label>
  <div class="field"></div><div class="field"></div><div class="field"></div><div class="field"></div>
  <i class="bar"></i>
</aside>

<div class="ime">
  <svg width="18" height="18"><use href="#wan"/></svg>
  <b>英</b>
  <svg width="14" height="14" viewBox="0 0 14 14"><path d="M9 0C15 5 12 13 5 14 3 14 1 13 0 11 6 11 10 7 9 0Z" fill="#4a8fd8"/></svg>
  <svg width="12" height="14" viewBox="0 0 12 14"><circle cx="3" cy="3" r="2.500" fill="#4a8fd8"/><path d="M8 6H12V10L9 14H8L9 10H8Z" fill="#4a8fd8"/></svg>
  <svg width="16" height="14" viewBox="0 0 16 14"><path d="M1 1.500H15V12.500H1Z" fill="none" stroke="#4a8fd8" stroke-width="2"/><path d="M3 4.500H13M3 7H13M5 10H11" stroke="#4a8fd8" stroke-width="2" stroke-dasharray="2 1"/></svg>
  <svg width="12" height="14" viewBox="0 0 12 14"><circle cx="6" cy="3.500" r="3" fill="#d8d8d8"/><path d="M0 14C0 6 12 6 12 14Z" fill="#d8d8d8"/></svg>
  <b>简</b>
  <svg width="16" height="14" viewBox="0 0 16 14"><path d="M5 0C6 2 10 2 11 0L16 3 14 7 12 6V14H4V6L2 7 0 3Z" fill="#4a8fd8"/></svg>
  <svg width="14" height="14" viewBox="0 0 14 14"><circle cx="7" cy="7" r="4" fill="none" stroke="#4a8fd8" stroke-width="2"/><circle cx="7" cy="7" r="6" fill="none" stroke="#4a8fd8" stroke-width="2" stroke-dasharray="3 2"/></svg>
</div>
</body>
</html>
```
FILE: styles.css
```css
*, *::before, *::after { box-sizing: border-box; }
body {
  margin: 0; height: 100vh; overflow: hidden; position: relative;
  display: flex; flex-direction: column;
  font: 12px/16px "Noto Sans", "Noto Sans CJK SC", sans-serif;
  color: #444; background: #e9e9e9;
}
button { font: inherit; color: inherit; background: none; border: 0; padding: 0; display: flex; align-items: center; white-space: nowrap; }
ul, ol, h1, h2, h3, p { margin: 0; padding: 0; list-style: none; }
svg { flex: none; display: block; }
.defs { display: none; }
.ico { fill: none; stroke: currentColor; }
.s16 { width: 16px; height: 16px; }
.s18 { width: 18px; height: 18px; }
.s24 { width: 24px; height: 24px; }
.dd { width: 6px; height: 4px; color: #888; }
.pale, .pale .dd { color: #b0b0b0; }
.vr { width: 1px; height: 20px; background: #d5d9dc; }

/* title bar */
.titlebar { flex: none; height: 30px; display: flex; justify-content: space-between; background: #f3f7f8; border-bottom: 1px solid #c5d2d8; }
.doctabs { display: flex; height: 30px; }
.doctab { height: 29px; padding-top: 3px; }
.home { width: 72px; padding-right: 4px; justify-content: center; color: #fff; background: #6090fa; }
.docer { width: 119px; padding-left: 14px; gap: 4px; background: linear-gradient(90deg, #e4e9f5, #e9e9f2); }
.current { width: 250px; height: 30px; padding-left: 9px; gap: 4px; color: #df6a3c; background: #f5f5f5; border: 1px solid #c5ced6; border-bottom: 0; }
.screen { color: #aaa; margin-left: 14px; }
.dirty { width: 6px; height: 6px; border-radius: 50%; background: #d9a55c; margin-left: 7px; }
.addtab { padding-left: 17px; padding-top: 2px; color: #555; }
.account { display: flex; align-items: center; gap: 10px; padding-right: 9px; color: #777; }
.account .vr { margin: 0 1px; }
.user { margin-right: 3px; }
.count { width: 21px; height: 16px; padding-right: 5px; text-align: center; background: linear-gradient(90deg, #777 16px, transparent 16px, transparent 17px, #777 17px, #777 18px, transparent 18px, transparent 20px, #777 20px); color: #fff; }
.count b { font-weight: 600; }
.account button { margin-left: 8px; }
.account .vr + button { margin-left: 16px; }

/* menu row */
.menubar { flex: none; height: 38px; padding-top: 1px; display: flex; align-items: center; background: #f5f5f5; }
.file { width: 87px; height: 24px; padding-left: 15px; gap: 6px; border-right: 1px solid #ddd; }
.file .pale { margin-left: 2px; }
.quick { width: 196px; display: flex; align-items: center; padding-left: 9px; gap: 9px; }
.quick .dd { margin-left: 3px; }
.quick button:last-child { margin-left: 4px; }
.tabs { display: flex; align-items: center; gap: 26px; }
.tabs .on { width: 44px; height: 20px; justify-content: center; border-radius: 10px; background: #e67c4e; color: #fff; font-weight: 700; margin-right: -10px; }
.tabs .dev { margin: 0 3px; color: #111; }
.seek { margin-left: 2px; }
.cloudbar { margin-left: auto; display: flex; align-items: center; gap: 10px; padding-right: 15px; }
.cloudbar button { gap: 4px; }
.cloudbar .sym { margin-left: 3px; margin-right: 5px; }
.cloudbar .sym:last-child { margin-right: 0; }

/* ribbon */
.ribbon { flex: none; height: 64px; display: flex; background: #f5f5f5; box-shadow: 0 1px 3px #bbb; position: relative; z-index: 1; padding-bottom: 3px; }
.g { display: flex; align-items: flex-start; padding-top: 5px; border-right: 1px solid #e4e4e4; position: relative; }
.lg { flex-direction: column; gap: 4px; }
.lg span { display: flex; align-items: center; gap: 3px; height: 18px; }
.stack { display: flex; flex-direction: column; gap: 11px; padding-top: 2px; }
.stack button { gap: 4px; height: 16px; }
.corner { position: absolute; right: 4px; bottom: 1px; width: 5px; height: 5px; border: solid #bbb; border-width: 0 1px 1px 0; }
.g1 { width: 158px; padding-left: 13px; gap: 11px; }
.g2 { width: 91px; padding-left: 10px; }
.g3 { width: 189px; padding-left: 10px; gap: 12px; }
.g4 { width: 255px; padding-left: 5px; }
.g5 { width: 236px; padding-left: 6px; }
.g6 { width: 236px; padding-left: 11px; gap: 11px; }
.g6 .stack + .stack { margin-left: -2px; }
.g7 { width: 199px; padding-left: 10px; gap: 11px; }
.g8 { width: 70px; padding-left: 11px; }
.hot { stroke: #d98250; }
.rows { flex-direction: column; padding-top: 2px; gap: 3px; }
.row { display: flex; align-items: center; height: 24px; }
.combo { display: flex; width: 184px; height: 24px; margin-right: 3px; border: 1px solid #c9c9c9; border-radius: 3px; background: #fff; }
.combo label { display: flex; align-items: center; padding-right: 2px; }
.combo input { flex: 1; min-width: 0; border: 0; background: none; font: 14px "Noto Sans", sans-serif; color: #444; padding: 0 3px; }
.font { flex: 116; min-width: 0; }
.size { flex: 68; min-width: 0; border-left: 1px solid #c9c9c9; }
.t { width: 25px; height: 24px; justify-content: center; font-size: 16px; }
.wide { width: 36px; padding-left: 4px; gap: 4px; justify-content: flex-start; }
.g4 .wide { width: 34px; padding-left: 3px; }
.big { width: 26px; font-size: 18px; }
.t sup, .t sub { font-size: 9px; line-height: 9px; }
.t sup { align-self: flex-start; margin-top: 2px; }
.t sub { align-self: flex-end; margin-bottom: 1px; }
.acol { border-bottom: 3px solid #b0b0b0; line-height: 14px; padding: 0 2px; }
.wen { display: flex; flex-direction: column; align-items: center; font-size: 11px; line-height: 11px; color: #222; width: 18px; }
.wen i { font-style: normal; font-size: 9px; line-height: 9px; color: #d9703c; }

/* work area */
.work { flex: 1; min-height: 0; display: flex; }
.outline { width: 299px; flex: none; display: flex; flex-direction: column; border-right: 1px solid #d4d4d4; position: relative; }
.viewsw { flex: none; height: 44px; display: flex; align-items: center; padding-left: 7px; }
.fold { width: 99px; color: #888; }
.viewsw .on { width: 56px; height: 20px; margin-left: 13px; justify-content: center; border-radius: 10px; color: #fff; background: #a2a2a2; }
.thumbs { flex: 1; min-height: 0; overflow: hidden; padding-top: 1px; }
.thumbs > li { display: flex; margin-bottom: 16px; }
.no { width: 34px; padding: 7px 3px 0 0; text-align: right; font-weight: 700; }
.thumbs > .on .no { color: #cc6a3a; }
.frame { width: 246px; height: 141px; padding: 2px; border: 1px solid #bbb; background: #fff; overflow: hidden; }
.on > .frame { border-color: #cf6b3d; border-radius: 3px; box-shadow: 0 0 0 1px #cf6b3d; }
.frame .slide { width: 1466px; height: 825px; zoom: 0.1637; overflow: hidden; }
.frame .slide footer { color: #47817f; }
.thumbbar { position: absolute; left: 285px; top: 378px; width: 8px; height: 112px; border-radius: 4px; background: #a8a8a8; }
.addslide { flex: none; height: 35px; padding: 0 0 4px 140px; color: #555; }

/* slide */
.slide { position: relative; background: #fff; color: #000; padding-top: 49px; font-family: "Noto Sans", "Noto Sans CJK SC", sans-serif; }
.band { position: absolute; left: 0; top: 0; width: 100%; height: calc(100% - 64px); }
.slide h1, .slide h2 { position: relative; margin-right: 76px; font-size: 84px; line-height: 100px; font-weight: 700; text-align: center; color: #20837e; white-space: nowrap; }
.slide ul { position: relative; padding: 50px 0 0 143px; font-size: 41px; line-height: 49px; white-space: nowrap; }
.slide ul li { position: relative; margin-bottom: 14px; }
.slide ul li::before { content: ""; position: absolute; left: -52px; top: 10px; width: 30px; height: 30px; border: 6px solid #000; }
.slide footer { position: absolute; left: 0; right: 0; bottom: 0; height: 64px; padding-left: 92px; background: #20837e; color: #7f8685; font: 400 52px/68px "Noto Sans CJK SC", sans-serif; text-align: center; white-space: nowrap; }
.slide ul .sub::before { content: "✓"; border: 0; top: 0; left: -78px; font-family: "DejaVu Sans", sans-serif; }
.cols { position: relative; display: flex; }
.tree { position: relative; width: 1466px; height: 305px; stroke: #777; fill: none; stroke-width: 0.5; margin-top: 14px; }
.tree text { stroke: none; fill: #444; }
.tree .paper { fill: #fff; stroke: none; }
.nav .cols ul { width: 686px; padding: 56px 0 0 106px; font-size: 29px; line-height: 34px; }
.nav .cols ul + ul { padding-top: 22px; font-size: 28px; }
.nav .cols li { margin: 0; }
.nav .cols li::before { left: -38px; top: 6px; width: 22px; height: 22px; border-width: 5px; }
.prop .cols ul { padding: 35px 0 0 110px; width: 696px; font-size: 25px; line-height: 44px; }
.prop .cols li { margin: 0; }
.prop .cols li::before { left: -46px; top: 13px; width: 20px; height: 20px; border-width: 5px; }
.prop .cols .sub { padding-left: 108px; }
.prop .cols .sub::before { left: 24px; top: 0; }
.prop .cols .next { margin-top: 44px; }
.prop .cols div ul { padding-top: 20px; }
.prop table { margin: 64px 0 0 98px; width: 395px; border-collapse: collapse; font-size: 17px; line-height: 40px; background: #fff; }
.prop th, .prop td { padding: 0 14px; text-align: left; border-bottom: 1px solid #ccc; }
.prop th { background: #333; color: #fff; }
.prop tr:nth-child(even) { background: #f4f4f4; }
.prop td + td, .prop th + th { width: 70px; padding: 0; }
.make ul { padding-top: 0; font-size: 38px; line-height: 59px; }
.make ul li { margin: 0; }
.make ul li::before { top: 15px; }
.make .sub { padding-left: 109px; font-size: 35px; }
.make ul .sub::before { left: 32px; }

.stage { flex: 1; min-width: 0; display: flex; flex-direction: column; }
.canvas { flex: 1; min-height: 0; padding: 20px 66px 0 30px; }
.main { aspect-ratio: 1466 / 825; box-shadow: 1px 1px 8px 2px #aaa; }
.pointer { position: absolute; left: 437px; top: 585px; }
.hbar { flex: none; height: 14px; margin-bottom: 3px; padding: 4px 8px; background: #dfdfdf; }
.vbar { flex: none; width: 14px; display: flex; flex-direction: column; align-items: center; gap: 10px; padding: 12px 0 25px; background: #e0e0e0; color: #777; }
.vbar .grip { width: 14px; height: 32px; margin: 321px 0 auto; border: 1px solid #aaa; border-radius: 7px; background: #f7f7f7; }
.dock { flex: none; width: 45px; display: flex; flex-direction: column; align-items: center; color: #555; }
.handle { width: 16px; height: 4px; margin: 11px 0 11px; border: solid #bbb; border-width: 1px 0; }
.dock button { width: 45px; height: 36px; justify-content: center; flex: none; }
.rule { width: 40px; height: 1px; margin: 6px 0; background: #d0d0d0; }

/* status bar */
.status { flex: none; height: 34px; padding-top: 1px; display: flex; align-items: center; background: #f6f6f6; color: #555; }
.cell { display: flex; align-items: center; gap: 4px; height: 30px; padding: 0 11px; border-right: 1px solid #e8e8e8; }
.first { padding: 0 15px 0 10px; }
.missing { padding: 0 18px; }
.beauty { margin-left: 630px; gap: 6px; }
.beauty .s18 { color: #e0714a; }
.views { margin-left: auto; display: flex; align-items: center; gap: 3px; }
.views button { width: 23px; height: 24px; justify-content: center; border-radius: 3px; }
.views .nt { width: 30px; gap: 2px; }
.views .on { background: #c6c6c6; }
.views .show { width: 31px; margin-left: 12px; background: #fa7a58; }
.zoomer { display: flex; align-items: center; gap: 9px; margin-left: 19px; padding-right: 12px; }
.zoomer .dd { margin-left: -5px; margin-right: 2px; }
.zoomer .fit { margin-left: 4px; }
.zoomer input { appearance: none; width: 142px; height: 14px; margin: 0; background: linear-gradient(#888, #888) 0 7px / 100% 1px no-repeat; }
.zoomer input::-webkit-slider-thumb { appearance: none; width: 13px; height: 13px; border: 1px solid #555; border-radius: 50%; background: #f6f6f6; }

/* system bar */
.taskbar { flex: none; height: 30px; display: flex; justify-content: space-between; background: #0d1215; color: #fff; }
.taskbar nav { display: flex; }
.taskbar nav button { width: 37px; justify-content: center; position: relative; }
.run::after { content: ""; position: absolute; left: 4px; right: 4px; bottom: 0; height: 2px; background: #76c7e8; }
.taskbar nav .active { background: #3b4144; }
.active::after { left: 0; right: 0; }
.tray { display: flex; align-items: center; gap: 8px; padding-right: 19px; }
.up { margin-right: 2px; }
.tray b { width: 16px; font-size: 14px; margin-right: 4px; }
.tray time { margin-left: 9px; }

/* transition pane */
.panel { position: absolute; right: 0; top: 573px; bottom: 0; width: 23px; overflow: hidden; z-index: 2; padding: 6px 0 0 12px; background: #f4f4f4; box-shadow: -1px 0 4px #aaa; }
.panel .top { margin-left: 3px; }
.panel h3 { font-size: 14px; line-height: 20px; font-weight: 400; color: #d9703c; margin: 14px 0 8px; }
.panel .list { width: 60px; height: 64px; padding: 3px 4px; border: 1px solid #ccc; border-radius: 2px; background: #fff; }
.list i { display: block; height: 48px; background: #bbb; }
.panel .list + h3 { margin: 20px 0 10px; }
.panel p { font-size: 14px; line-height: 20px; margin-bottom: 14px; }
.panel p + label { margin-top: -6px; }
.panel label { display: block; height: 25px; }
.panel input { appearance: none; display: block; width: 14px; height: 14px; margin: 0 0 0 1px; border: 1px solid #888; border-radius: 2px; background: #fff; }
.panel input:disabled { border-color: #ccc; }
.panel input:checked::after { content: ""; display: block; width: 9px; height: 5px; margin: 2px 0 0 2px; border: solid #4a6fc8; border-width: 0 0 2px 2px; transform: rotate(-45deg); }
.panel label + h3 { margin: 8px 0 4px; }
.field { width: 60px; height: 23px; margin-bottom: 8px; border: 1px solid #ccc; border-radius: 2px; background: #fff; }
.bar { position: absolute; right: 0; top: 401px; width: 8px; height: 44px; border-radius: 4px; background: #666; }

/* input method bar */
.ime { position: absolute; right: 3px; bottom: 65px; height: 24px; display: flex; align-items: center; gap: 8px; padding: 0 10px 0 5px; z-index: 3; border-radius: 4px; background: #fff; box-shadow: 0 0 3px #999; color: #4a8fd8; }
.ime b { font-size: 14px; width: 14px; }
```
